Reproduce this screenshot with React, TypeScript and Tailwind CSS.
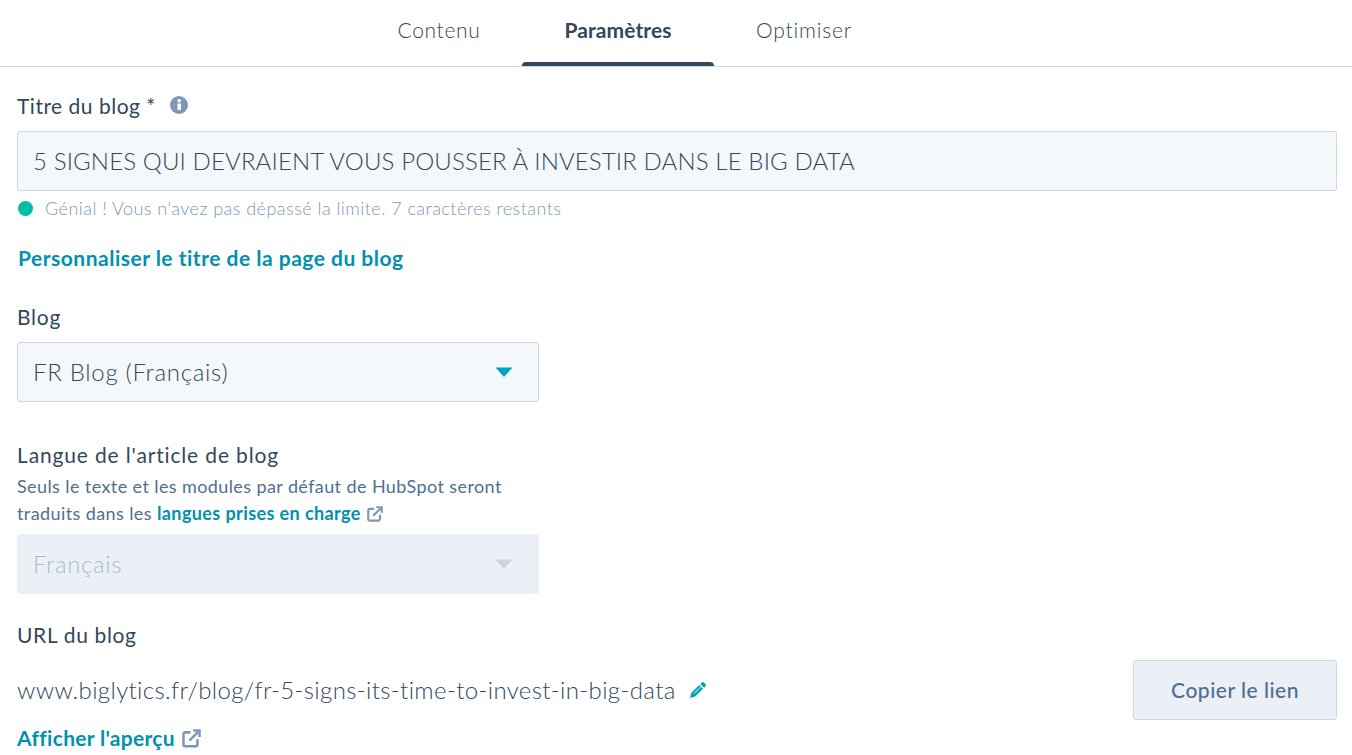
import React from "react";

function ExternalIcon({ className }: { className: string }) {
  return (
    <svg viewBox="0 0 18 18" className={className} fill="none" stroke="#7c98b6" strokeWidth="2.4">
      <path d="M8 3.2H3a1.6 1.6 0 0 0-1.6 1.6v10A1.6 1.6 0 0 0 3 16.4h10a1.6 1.6 0 0 0 1.6-1.6v-5" />
      <path d="M7 11 15.5 2.5" />
      <path d="M10.5 1.4h6.1v6.1" />
    </svg>
  );
}

function Caret({ color }: { color: string }) {
  return (
    <svg width="18" height="10" viewBox="0 0 18 10">
      <path d="M0.5 0.5h17L9 10z" fill={color} />
    </svg>
  );
}

export default function App() {
  return (
    <div className="w-[1352px] h-[755px] overflow-hidden bg-white font-['Lato',sans-serif] text-[#33475b]">
      <div className="h-[67px] border-b border-[#cbd6e2] flex pl-[354px]">
        <div className="w-[170px] h-[66px] flex items-center justify-center pb-[6px] text-[21px] font-light tracking-[0.65px] text-[#33475b]">Contenu</div>
        <div className="relative w-[192px] h-[66px] flex items-center justify-center pb-[6px] text-[21px] font-bold tracking-[0.1px] ml-[-2px]">
          Paramètres
          <div className="absolute left-0 right-0 bottom-0 h-[4px] rounded-t-[4px] bg-[#33475b]" />
        </div>
        <div className="w-[180px] h-[66px] flex items-center justify-center pb-[6px] text-[21px] font-light tracking-[0.8px] text-[#33475b]">Optimiser</div>
      </div>

      <div className="pl-[17px] pr-[15px]">
        <div className="flex items-center h-[26px] mt-[26px] text-[21px] font-normal tracking-[0.5px]">
          Titre du blog *
          <svg viewBox="0 0 18 18" className="w-[18px] h-[18px] ml-[14px] mt-[-2px]">
            <circle cx="9" cy="9" r="9" fill="#7c98b6" />
            <rect x="7.5" y="7.5" width="3.4" height="6.5" fill="#fff" />
            <circle cx="9.2" cy="4.8" r="1.8" fill="#fff" />
          </svg>
        </div>
        <div className="mt-[12px] h-[60px] flex items-center px-[15px] bg-[#f5f8fa] border border-[#cbd6e2] rounded-[3px] text-[24px] font-light text-[#33475b] tracking-[0.14px]">
          5 SIGNES QUI DEVRAIENT VOUS POUSSER À INVESTIR DANS LE BIG DATA
        </div>
        <div className="flex items-center mt-[6px] h-[22px] text-[18px] text-[#7c98b6] font-light tracking-[0.46px]">
          <span className="w-[15px] h-[15px] rounded-full bg-[#00bda5] ml-[1px] mr-[12px]" />
          Génial ! Vous n'avez pas dépassé la limite. 7 caractères restants
        </div>
        <div className="mt-[26px] ml-[1px] h-[26px] flex items-center text-[21px] font-bold text-[#0091ae] tracking-[0.5px]">
          Personnaliser le titre de la page du blog
        </div>

        <div className="mt-[33px] h-[26px] flex items-center text-[21px] font-normal tracking-[0.75px]">Blog</div>
        <div className="mt-[12px] w-[522px] h-[60px] flex items-center justify-between pl-[15px] pr-[25px] bg-[#f5f8fa] border border-[#cbd6e2] rounded-[3px] text-[24px] font-light tracking-[0.7px]">
          FR Blog (Français)
          <Caret color="#00a4bd" />
        </div>

        <div className="mt-[40px] h-[26px] flex items-center text-[21px] font-normal tracking-[0.85px]">Langue de l'article de blog</div>
        <div className="mt-[5px] w-[522px] text-[18px] leading-[27px] text-[#516f90] tracking-[0.4px]">
          Seuls le texte et les modules par défaut de HubSpot seront
          <br />
          traduits dans les{" "}
          <span className="font-bold text-[#0091ae]">langues prises en charge</span>
          <ExternalIcon className="inline-block w-[16px] h-[16px] ml-[6px] mt-[-3px]" />
        </div>
        <div className="mt-[7px] w-[522px] h-[60px] flex items-center justify-between pl-[16px] pr-[26px] bg-[#eaf0f6] rounded-[3px] text-[24px] font-light text-[#a9bccf] tracking-[0.65px]">
          Français
          <Caret color="#cbd6e2" />
        </div>

        <div className="mt-[28px] h-[26px] flex items-center text-[21px] font-normal tracking-[0.65px]">URL du blog</div>
        <div className="mt-[12px] flex items-center justify-between h-[60px]">
          <div className="flex items-center text-[24px] font-light text-[#33475b] tracking-[0.36px]">
            www.biglytics.fr/blog/fr-5-signs-its-time-to-invest-in-big-data
            <svg viewBox="0 0 18 18" className="w-[18px] h-[18px] ml-[13px]" fill="#00a4bd">
              <path d="M12.6 1.6a1.6 1.6 0 0 1 2.3 0l1.5 1.5a1.6 1.6 0 0 1 0 2.3l-1.3 1.3-3.8-3.8zM10.2 4 14 7.8 6.2 15.6 1 17l1.4-5.2z" />
              <path d="M5 12.5 11.5 6" stroke="#fff" strokeWidth="0.9" />
            </svg>
          </div>
          <div className="w-[204px] h-[60px] flex items-center justify-center bg-[#eaf0f6] border border-[#cbd6e2] rounded-[3px] text-[21px] font-medium text-[#506e91] tracking-[0.5px]">
            Copier le lien
          </div>
        </div>
        <div className="mt-[5px] h-[26px] flex items-center text-[21px] font-bold text-[#0091ae] tracking-[0.3px]">
          Afficher l'aperçu
          <ExternalIcon className="w-[19px] h-[19px] ml-[7px]" />
        </div>
      </div>
    </div>
  );
}
